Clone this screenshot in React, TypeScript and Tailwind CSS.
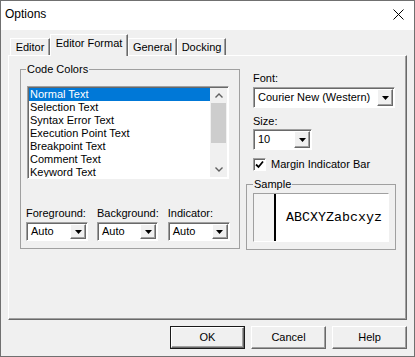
import React from 'react';

const raised =
  'border border-t-white border-l-white border-r-[#696969] border-b-[#696969] shadow-[inset_-1px_-1px_0_#a0a0a0]';
const sunken =
  'border border-t-[#a0a0a0] border-l-[#a0a0a0] border-r-white border-b-white shadow-[inset_1px_1px_0_#696969]';

const colorItems = [
  'Normal Text',
  'Selection Text',
  'Syntax Error Text',
  'Execution Point Text',
  'Breakpoint Text',
  'Comment Text',
  'Keyword Text',
];

const DropArrow = () => (
  <svg width="7" height="4" viewBox="0 0 7 4">
    <path d="M0 0h7L3.5 4z" fill="#000" />
  </svg>
);

interface ComboProps {
  value: string;
  className: string;
}

/** Classic sunken combo box with a raised drop button on the right */
const Combo = ({ value, className }: ComboProps) => (
  <div className={`flex items-center bg-white p-[1px] ${sunken} ${className}`}>
    <span className="flex-1 truncate pl-[3px] leading-[13px]">{value}</span>
    <span
      className={`flex h-full w-[16px] items-center justify-center bg-[#f0f0f0] ${raised}`}
    >
      <DropArrow />
    </span>
  </div>
);

const Chevron = ({ up }: { up?: boolean }) => (
  <svg width="8" height="5" viewBox="0 0 8 5">
    <path
      d={up ? 'M0.5 4.5L4 1L7.5 4.5' : 'M0.5 0.5L4 4L7.5 0.5'}
      stroke="#606060"
      strokeWidth="1.4"
      fill="none"
    />
  </svg>
);

interface TabProps {
  label: string;
  className: string;
  active?: boolean;
}

const Tab = ({ label, className, active }: TabProps) =>
  active ? (
    <div
      className={`relative z-10 -mb-[1px] flex h-[22px] items-start justify-center border-l border-t border-r border-l-white border-t-white border-r-[#696969] bg-[#f0f0f0] pt-[2px] shadow-[inset_-1px_0_0_#a0a0a0] ${className}`}
    >
      {label}
    </div>
  ) : (
    <div
      className={`flex h-[17px] items-center justify-center border-l border-t border-r border-l-white border-t-white border-r-[#696969] shadow-[inset_-1px_0_0_#a0a0a0] ${className}`}
    >
      {label}
    </div>
  );

const DialogButton = ({ label, isDefault }: { label: string; isDefault?: boolean }) =>
  isDefault ? (
    <div className="h-[23px] w-[75px] border border-[#1a1a1a]">
      <div
        className={`flex h-full w-full items-center justify-center bg-[#f0f0f0] ${raised}`}
      >
        {label}
      </div>
    </div>
  ) : (
    <div
      className={`flex h-[23px] w-[75px] items-center justify-center bg-[#f0f0f0] ${raised}`}
    >
      {label}
    </div>
  );

const App = () => {
  return (
    <div className="h-[357px] w-[415px] overflow-hidden border border-[#707070] bg-[#f0f0f0] font-['Liberation_Sans',Arial,sans-serif] text-[11px] leading-[13px] text-black">
      {/* Title bar */}
      <div className="flex h-[29px] items-center justify-between bg-white pb-[2px] pl-[4px] pr-[10px]">
        <span className="text-[12px] leading-[15px]">Options</span>
        <svg width="11" height="11" viewBox="0 0 11 11">
          <path d="M0.5 0.5L10.5 10.5M10.5 0.5L0.5 10.5" stroke="#000" strokeWidth="1" />
        </svg>
      </div>

      <div className="px-[7px] pt-[4px]">
        {/* Tabs */}
        <div className="flex h-[21px] items-end pl-[2px]">
          <Tab label="Editor" className="w-[40px]" />
          <Tab label="Editor Format" className="w-[78px]" active />
          <Tab label="General" className="w-[49px]" />
          <Tab label="Docking" className="w-[49px]" />
        </div>

        {/* Tab panel */}
        <div className={`flex h-[265px] w-[399px] pl-[11px] pt-[7px] ${raised}`}>
          {/* Code Colors group */}
          <fieldset className="w-[220px] self-start border border-[#a0a0a0] px-[5px] pb-[7px]">
            <legend className="px-[1px] leading-[13px]">Code Colors</legend>
            <div className={`ml-[1px] mt-[10px] flex h-[93px] w-[202px] bg-white p-[1px] ${sunken}`}>
              <div className="flex-1 overflow-hidden">
                {colorItems.map((item, i) => (
                  <div
                    key={item}
                    className={`h-[13px] whitespace-nowrap pl-[1px] leading-[13px] ${
                      i === 0 ? 'bg-[#0078d7] text-white' : ''
                    }`}
                  >
                    {item}
                  </div>
                ))}
              </div>
              <div className="flex w-[17px] flex-col bg-[#f0f0f0]">
                <div className="flex h-[15px] items-center justify-center">
                  <Chevron up />
                </div>
                <div className="mx-[1px] h-[40px] bg-[#cdcdcd]" />
                <div className="flex-1" />
                <div className="flex h-[15px] items-center justify-center">
                  <Chevron />
                </div>
              </div>
            </div>

            <div className="mt-[28px] flex gap-[9px]">
              <div className="flex flex-col">
                <span>Foreground:</span>
                <Combo value="Auto" className="mt-[2px] h-[19px] w-[62px]" />
              </div>
              <div className="flex flex-col">
                <span>Background:</span>
                <Combo value="Auto" className="mt-[2px] h-[19px] w-[61px]" />
              </div>
              <div className="flex flex-col">
                <span>Indicator:</span>
                <Combo value="Auto" className="mt-[2px] h-[19px] w-[62px]" />
              </div>
            </div>
          </fieldset>

          {/* Right column */}
          <div className="ml-[6px] flex w-[149px] flex-col">
            <span className="ml-[7px] mt-[9px]">Font:</span>
            <Combo value="Courier New (Western)" className="ml-[7px] mt-[2px] h-[21px] w-[142px]" />
            <span className="ml-[7px] mt-[7px]">Size:</span>
            <Combo value="10" className="ml-[7px] mt-[1px] h-[21px] w-[59px]" />

            <label className="ml-[7px] mt-[8px] flex items-center gap-[5px]">
              <span className={`flex h-[13px] w-[13px] items-center justify-center bg-white ${sunken}`}>
                <svg width="9" height="9" viewBox="0 0 9 9">
                  <path d="M1 4.5L3.5 7L8 1.5" stroke="#000" strokeWidth="1.8" fill="none" />
                </svg>
              </span>
              <span>Margin Indicator Bar</span>
            </label>

            {/* Sample group */}
            <fieldset className="mt-[7px] border border-[#a0a0a0] px-[6px] pb-[7px]">
              <legend className="px-[1px] leading-[13px]">Sample</legend>
              <div className={`mt-[2px] flex h-[49px] w-[136px] ${sunken}`}>
                <div className="w-[20px] bg-[#f4f4f4]" />
                <div className="w-[2px] bg-black" />
                <div className="flex flex-1 items-center bg-white pl-[10px] font-['Liberation_Mono','Courier_New',monospace] text-[13.33px]">
                  ABCXYZabcxyz
                </div>
              </div>
            </fieldset>
          </div>
        </div>

        {/* Dialog buttons */}
        <div className="mt-[6px] flex justify-end gap-[6px] pr-[-1px]">
          <DialogButton label="OK" isDefault />
          <DialogButton label="Cancel" />
          <DialogButton label="Help" />
        </div>
      </div>
    </div>
  );
};

export default App;
